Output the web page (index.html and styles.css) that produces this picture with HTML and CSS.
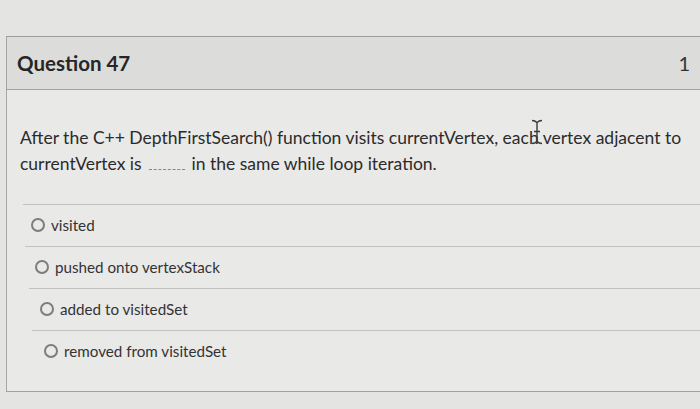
FILE: index.html
```html
<!DOCTYPE html>
<html>
<head>
<meta charset="utf-8">
<link rel="stylesheet" href="styles.css">
</head>
<body>
<div class="page">
  <div class="card">
    <div class="header">
      <span class="title">Question 47</span>
      <span class="points">1</span>
    </div>
    <div class="content">
      <p class="question">After the C++ DepthFirstSearch() function visits currentVertex, each vertex adjacent to currentVertex is <span class="blank"></span> in the same while loop iteration.</p>
      <ul class="options">
        <li class="option o1"><span class="radio"></span><span>visited</span></li>
        <li class="option o2"><span class="radio"></span><span>pushed onto vertexStack</span></li>
        <li class="option o3"><span class="radio"></span><span>added to visitedSet</span></li>
        <li class="option o4"><span class="radio"></span><span>removed from visitedSet</span></li>
      </ul>
    </div>
  </div>
  <svg class="cursor" width="12" height="26" viewBox="0 0 12 26">
    <path d="M1 1.5 Q4 1.5 6 3.5 Q8 1.5 11 1.5 M6 3.5 V22.5 M1 24.5 Q4 24.5 6 22.5 Q8 24.5 11 24.5 M3 12.5 H9" fill="none" stroke="#3a3a3a" stroke-width="1.4"/>
  </svg>
</div>
</body>
</html>
```
FILE: styles.css
```css
html, body {
  margin: 0;
  padding: 0;
}
body {
  width: 700px;
  height: 409px;
  overflow: hidden;
  background: #e4e4e3;
  font-family: Lato, "Open Sans", sans-serif;
  color: #2b2b2b;
}
.page {
  position: relative;
  padding-top: 36px;
}
.card {
  margin-left: 6px;
  border-top: 1px solid #9c9c9c;
  border-left: 1px solid #a5a5a5;
  border-bottom: 1px solid #a0a0a0;
  background: #e9e9e8;
}
.header {
  height: 52px;
  display: flex;
  align-items: center;
  justify-content: space-between;
  padding: 0 10px 0 10px;
  background: #dcdcdb;
  border-bottom: 1px solid #a2a2a2;
}
.title {
  font-size: 20.5px;
  font-weight: 700;
  color: #262626;
}
.points {
  font-size: 20px;
  color: #333;
}
.content {
  padding: 35px 0 0 13px;
  height: 301px;
  box-sizing: border-box;
}
.question {
  margin: 0;
  font-size: 17.5px;
  line-height: 26px;
  color: #2b2b2b;
}
.blank {
  display: inline-block;
  width: 36px;
  border-bottom: 1px dashed #888;
  margin: 0 2px 0 3px;
}
.options {
  list-style: none;
  margin: 27px 0 0 3px;
  padding: 0;
}
.option {
  height: 42px;
  border-top: 1px solid #c2c2c2;
  display: flex;
  align-items: center;
  gap: 6px;
  padding-bottom: 2px;
  font-size: 15.2px;
  color: #333;
  box-sizing: border-box;
}
.radio {
  width: 10px;
  height: 10px;
  border: 2px solid #7d7d7d;
  border-radius: 50%;
  flex: none;
}
.o1 { padding-left: 8px; }
.o2 { padding-left: 10px; margin-left: 2px; }
.o3 { padding-left: 11px; margin-left: 6px; }
.o4 { padding-left: 12px; margin-left: 9px; }
.cursor {
  position: absolute;
  left: 531px;
  top: 119px;
}
```
